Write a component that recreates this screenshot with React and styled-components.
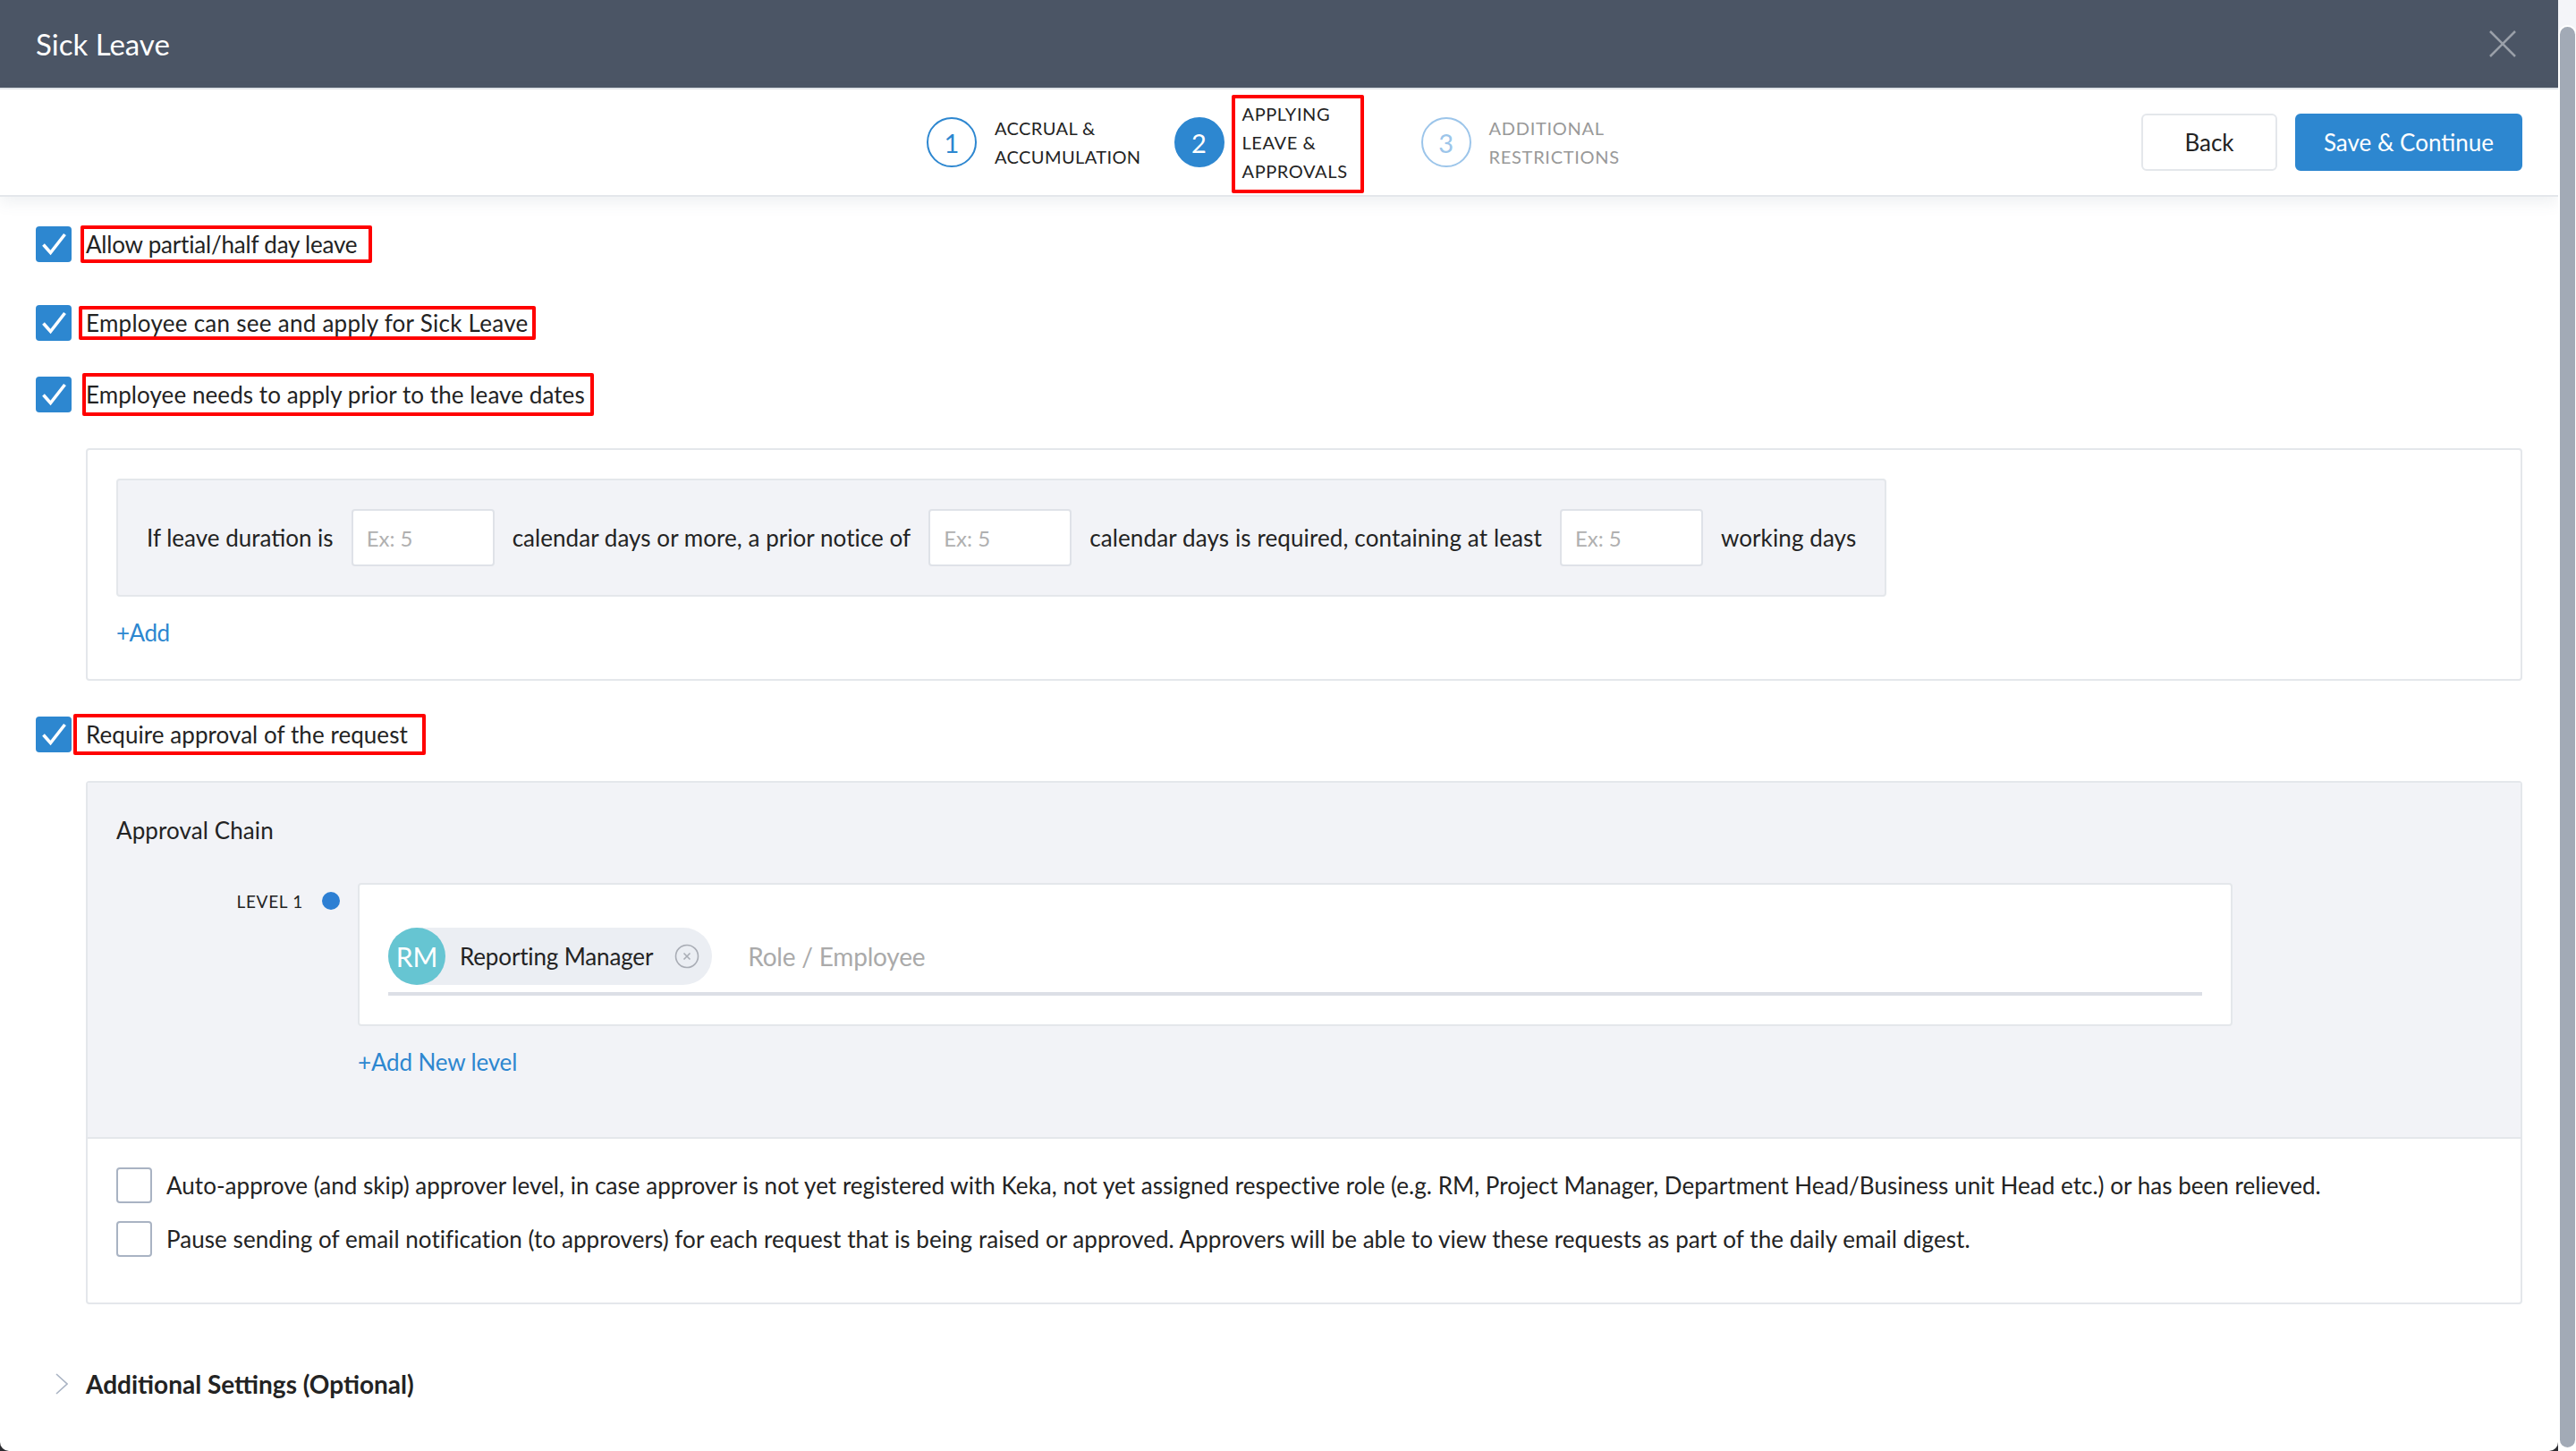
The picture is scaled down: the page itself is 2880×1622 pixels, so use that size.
import React from 'react';
import styled, { createGlobalStyle } from 'styled-components';

const GlobalStyle = createGlobalStyle`
  html, body {
    margin: 0;
    padding: 0;
    background: #2b2b30;
  }
  * { box-sizing: border-box; }
`;

const BLUE = '#2d87d0';
const LINE = '#e4e7eb';
const PANEL = '#f2f3f7';
const INK = '#232323';

const Page = styled.div`
  display: flex;
  width: 2880px;
  height: 1622px;
  overflow: hidden;
  font-family: Lato, "Open Sans", sans-serif;
  font-size: 26px;
  color: ${INK};
`;

const Main = styled.div`
  flex: 1;
  display: flex;
  flex-direction: column;
  background: #fff;
  border-bottom-left-radius: 10px;
  border-bottom-right-radius: 10px;
`;

const ScrollTrack = styled.div`
  width: 20px;
  flex: none;
  display: flex;
  padding: 30px 1px 4px 2px;
  background: linear-gradient(#f4f5f9 0, #f4f5f9 98px, #fff 98px);
`;

const ScrollThumb = styled.div`
  flex: 1;
  background: #a2aab6;
  border-radius: 9px;
  box-shadow: 0 0 0 2px #fff;
`;

const Header = styled.header`
  height: 100px;
  flex: none;
  display: flex;
  align-items: center;
  justify-content: space-between;
  padding: 0 47px 0 40px;
  background: #4b5565;
  border-bottom: 2px solid #e2e6ea;
  color: #fff;
`;

const Title = styled.div`
  font-size: 33px;
`;

const CloseIcon = styled.svg`
  width: 30px;
  height: 30px;
  color: #9aa0a9;
`;

const SubBar = styled.div`
  height: 120px;
  flex: none;
  display: flex;
  align-items: center;
  padding: 0 40px 0 1036px;
  border-bottom: 2px solid ${LINE};
  box-shadow: 0 6px 16px rgba(90, 105, 125, 0.1);
`;

const Stepper = styled.div`
  display: flex;
  align-items: center;
`;

const StepCircle = styled.div`
  width: 56px;
  height: 56px;
  flex: none;
  display: flex;
  align-items: center;
  justify-content: center;
  border-radius: 50%;
  font-size: 29px;
  border: 2px solid ${(p) => (p.$state === 'todo' ? '#9cc5ea' : BLUE)};
  background: ${(p) => (p.$state === 'active' ? BLUE : '#fff')};
  color: ${(p) => (p.$state === 'active' ? '#fff' : p.$state === 'todo' ? '#9cc5ea' : BLUE)};
`;

const StepLabel = styled.div`
  font-size: 20px;
  line-height: 32px;
  letter-spacing: ${(p) => p.$track}px;
  text-transform: uppercase;
  color: ${(p) => (p.$muted ? '#999' : INK)};
  margin: 0 ${(p) => p.$after}px 0 20px;
`;

const ActiveStepLabel = styled(StepLabel)`
  height: 110px;
  margin: 4px 64px 0 8px;
  padding: 0 14px 4px 8px;
  display: flex;
  align-items: center;
  border: 4px solid #f00;
  border-radius: 2px;
`;

const Actions = styled.div`
  margin-left: auto;
  display: flex;
  gap: 20px;
`;

const Button = styled.button`
  height: 64px;
  width: ${(p) => p.$width}px;
  border-radius: 6px;
  font: inherit;
  border: 2px solid ${(p) => (p.$primary ? BLUE : LINE)};
  background: ${(p) => (p.$primary ? BLUE : '#fff')};
  color: ${(p) => (p.$primary ? '#fff' : INK)};
`;

const Body = styled.div`
  flex: 1;
  display: flex;
  flex-direction: column;
  padding: 0 40px;
`;

const CheckRow = styled.div`
  display: flex;
  align-items: center;
  height: 40px;
  margin-top: ${(p) => p.$top}px;
`;

const CheckBox = styled.div`
  width: 40px;
  height: 40px;
  flex: none;
  border-radius: 4px;
  background: ${(p) => (p.$checked ? BLUE : '#fff')};
  border: ${(p) => (p.$checked ? 'none' : '2px solid #a9b3c3')};
  color: #fff;
`;

const TickIcon = styled.svg`
  display: block;
  width: 40px;
  height: 40px;
`;

const MarkedLabel = styled.div`
  height: ${(p) => p.$height}px;
  margin-left: ${(p) => p.$gap}px;
  padding: 0 ${(p) => p.$right}px 0 ${(p) => 96 - 80 - p.$gap - 4}px;
  display: flex;
  align-items: center;
  flex: none;
  border: 4px solid #f00;
  border-radius: 2px;
  white-space: nowrap;
  letter-spacing: ${(p) => p.$track}px;
`;

const Panel = styled.div`
  margin-left: 56px;
  border: 2px solid ${LINE};
  border-radius: 4px;
`;

const NoticePanel = styled(Panel)`
  margin-top: 40px;
  height: 260px;
  padding: 32px;
`;

const NoticeRow = styled.div`
  display: flex;
  align-items: center;
  gap: 20px;
  width: 1979px;
  height: 132px;
  padding: 0 32px;
  background: ${PANEL};
  border: 2px solid ${LINE};
  border-radius: 4px;
  white-space: nowrap;
`;

const NoticeText = styled.span`
  letter-spacing: ${(p) => p.$track}px;
`;

const SmallInput = styled.input`
  width: 160px;
  height: 64px;
  padding: 0 15px;
  border: 2px solid #dfe2e8;
  border-radius: 4px;
  background: #fff;
  font: inherit;
  font-size: 24px;
  &::placeholder { color: #b0b0b0; opacity: 1; }
`;

const TextLink = styled.div`
  color: ${BLUE};
  white-space: nowrap;
  line-height: 32px;
  letter-spacing: ${(p) => p.$track}px;
`;

const AddLink = styled(TextLink)`
  margin-top: 24px;
`;

const ApprovalPanel = styled(Panel)`
  margin-top: 32px;
  height: 585px;
  display: flex;
  flex-direction: column;
`;

const ChainArea = styled.div`
  height: 398px;
  flex: none;
  padding: 35px 32px 0;
  background: ${PANEL};
  border-bottom: 2px solid ${LINE};
`;

const ChainTitle = styled.div`
  line-height: 36px;
  letter-spacing: 0.1px;
`;

const LevelRow = styled.div`
  display: flex;
  margin-top: 41px;
`;

const LevelTag = styled.div`
  width: 270px;
  height: 40px;
  flex: none;
  display: flex;
  align-items: center;
  justify-content: flex-end;
  gap: 21px;
  padding-right: 20px;
  font-size: 19px;
  letter-spacing: 0.7px;
  text-transform: uppercase;
`;

const LevelDot = styled.span`
  width: 20px;
  height: 20px;
  border-radius: 50%;
  background: #2d7fd3;
`;

const ApproverBox = styled.div`
  width: 2096px;
  height: 160px;
  padding: 48px 32px 0;
  background: #fff;
  border: 2px solid ${LINE};
  border-radius: 4px;
`;

const ApproverField = styled.div`
  display: flex;
  align-items: center;
  gap: 40px;
  height: 76px;
  padding-bottom: 8px;
  border-bottom: 4px solid #dcdfe6;
`;

const Chip = styled.div`
  display: flex;
  align-items: center;
  height: 64px;
  padding-right: 14px;
  border-radius: 32px;
  background: #ebeef3;
  white-space: nowrap;
  letter-spacing: -0.15px;
`;

const Avatar = styled.div`
  width: 64px;
  height: 64px;
  display: flex;
  align-items: center;
  justify-content: center;
  border-radius: 50%;
  background: #66c5d2;
  color: #fff;
  font-size: 30px;
  margin-right: 16px;
`;

const ChipRemove = styled.svg`
  width: 28px;
  height: 28px;
  margin-left: 24px;
  color: #a9adb5;
`;

const RolePlaceholder = styled.div`
  font-size: 28px;
  letter-spacing: -0.2px;
  color: #aaa;
`;

const NewLevelLink = styled(TextLink)`
  margin: 24px 0 0 270px;
`;

const OptionList = styled.div`
  display: flex;
  flex-direction: column;
  gap: 20px;
  padding: 32px 32px 0;
`;

const OptionRow = styled.div`
  display: flex;
  align-items: center;
  gap: 16px;
  white-space: nowrap;
  letter-spacing: ${(p) => p.$track}px;
`;

const AdditionalRow = styled.div`
  display: flex;
  align-items: center;
  height: 36px;
  margin-top: 71px;
  padding-left: 22px;
  gap: 20px;
  font-weight: 700;
  font-size: 28px;
`;

const ChevronIcon = styled.svg`
  width: 14px;
  height: 24px;
  color: #a9b3c3;
`;

const Tick = () => (
  <TickIcon viewBox="0 0 40 40" fill="none" stroke="currentColor" strokeWidth="3.6">
    <path d="M8.5 20.5L16.5 29.5L32.5 9" />
  </TickIcon>
);

const App = () => {
  return (
    <>
      <GlobalStyle />
      <Page>
        <Main>
          <Header>
            <Title>Sick Leave</Title>
            <CloseIcon viewBox="0 0 30 30" fill="none" stroke="currentColor" strokeWidth="2.5">
              <path d="M1 1L29 29M29 1L1 29" />
            </CloseIcon>
          </Header>
          <SubBar>
            <Stepper>
              <StepCircle $state="done">1</StepCircle>
              <StepLabel $track={0.4} $after={37}>Accrual &amp;<br />Accumulation</StepLabel>
              <StepCircle $state="active">2</StepCircle>
              <ActiveStepLabel $track={0.6}><div>Applying<br />Leave &amp;<br />Approvals</div></ActiveStepLabel>
              <StepCircle $state="todo">3</StepCircle>
              <StepLabel $muted $track={0.7} $after={0}>Additional<br />Restrictions</StepLabel>
            </Stepper>
            <Actions>
              <Button $width={152}>Back</Button>
              <Button $primary $width={254}>Save &amp; Continue</Button>
            </Actions>
          </SubBar>
          <Body>
            <CheckRow $top={33}>
              <CheckBox $checked><Tick /></CheckBox>
              <MarkedLabel $gap={10} $height={42} $right={13} $track={-0.2}>Allow partial/half day leave</MarkedLabel>
            </CheckRow>
            <CheckRow $top={48}>
              <CheckBox $checked><Tick /></CheckBox>
              <MarkedLabel $gap={8} $height={38} $right={4} $track={0.27}>Employee can see and apply for Sick Leave</MarkedLabel>
            </CheckRow>
            <CheckRow $top={40}>
              <CheckBox $checked><Tick /></CheckBox>
              <MarkedLabel $gap={12} $height={48} $right={6} $track={0.08}>Employee needs to apply prior to the leave dates</MarkedLabel>
            </CheckRow>
            <NoticePanel>
              <NoticeRow>
                <NoticeText $track={0}>If leave duration is</NoticeText>
                <SmallInput placeholder="Ex: 5" />
                <NoticeText $track={0.05}>calendar days or more, a prior notice of</NoticeText>
                <SmallInput placeholder="Ex: 5" />
                <NoticeText $track={0.12}>calendar days is required, containing at least</NoticeText>
                <SmallInput placeholder="Ex: 5" />
                <NoticeText $track={0.1}>working days</NoticeText>
              </NoticeRow>
              <AddLink $track={-0.5}>+Add</AddLink>
            </NoticePanel>
            <CheckRow $top={40}>
              <CheckBox $checked><Tick /></CheckBox>
              <MarkedLabel $gap={2} $height={46} $right={16} $track={0.06}>Require approval of the request</MarkedLabel>
            </CheckRow>
            <ApprovalPanel>
              <ChainArea>
                <ChainTitle>Approval Chain</ChainTitle>
                <LevelRow>
                  <LevelTag>Level 1<LevelDot /></LevelTag>
                  <ApproverBox>
                    <ApproverField>
                      <Chip>
                        <Avatar>RM</Avatar>
                        Reporting Manager
                        <ChipRemove viewBox="0 0 28 28" fill="none" stroke="currentColor" strokeWidth="1.6">
                          <circle cx="14" cy="14" r="12.5" />
                          <path d="M10.5 10.5l7 7M17.5 10.5l-7 7" />
                        </ChipRemove>
                      </Chip>
                      <RolePlaceholder>Role / Employee</RolePlaceholder>
                    </ApproverField>
                  </ApproverBox>
                </LevelRow>
                <NewLevelLink $track={-0.15}>+Add New level</NewLevelLink>
              </ChainArea>
              <OptionList>
                <OptionRow $track={0.035}>
                  <CheckBox />
                  Auto-approve (and skip) approver level, in case approver is not yet registered with Keka, not yet assigned respective role (e.g. RM, Project Manager, Department Head/Business unit Head etc.) or has been relieved.
                </OptionRow>
                <OptionRow $track={0.055}>
                  <CheckBox />
                  Pause sending of email notification (to approvers) for each request that is being raised or approved. Approvers will be able to view these requests as part of the daily email digest.
                </OptionRow>
              </OptionList>
            </ApprovalPanel>
            <AdditionalRow>
              <ChevronIcon viewBox="0 0 14 24" fill="none" stroke="currentColor" strokeWidth="1.6">
                <path d="M1 1L13 12L1 23" />
              </ChevronIcon>
              Additional Settings (Optional)
            </AdditionalRow>
          </Body>
        </Main>
        <ScrollTrack>
          <ScrollThumb />
        </ScrollTrack>
      </Page>
    </>
  );
};

export default App;
